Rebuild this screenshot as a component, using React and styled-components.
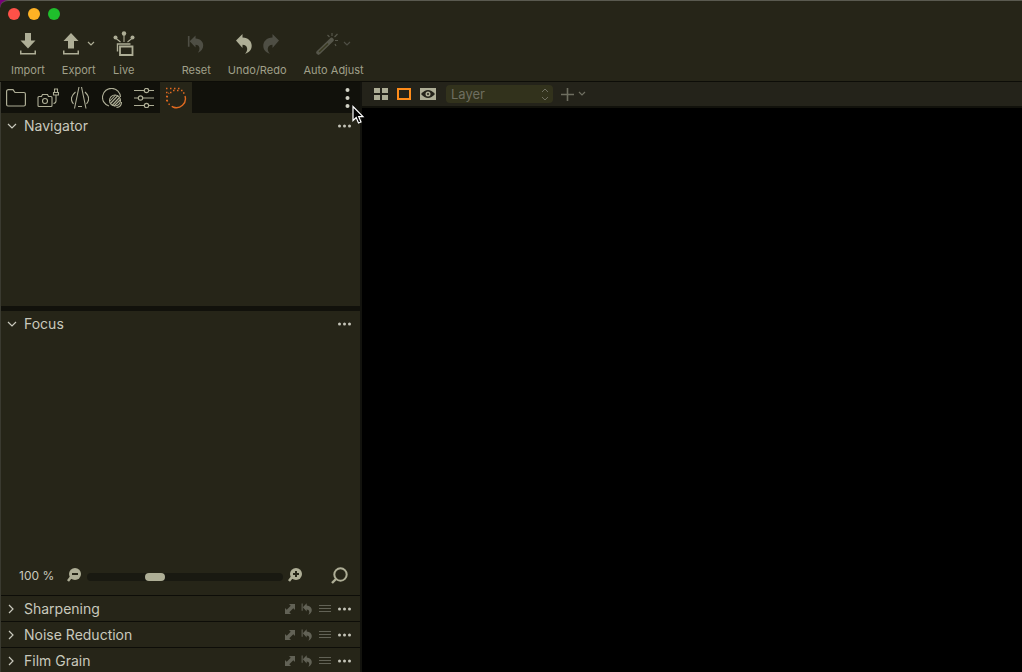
import React from 'react'
import styled, { createGlobalStyle } from 'styled-components'

const theme = {
  panel: '#262518',
  bar: '#11110b',
  line: '#0d0d08',
  edge: '#5a5a50',
  text: '#c9c9bd',
  label: '#a0a08a',
  icon: '#aeae96',
  dim: '#4e4e44',
  accent: '#ff8c1a',
}

const GlobalStyle = createGlobalStyle`
  * {
    box-sizing: border-box;
  }

  body {
    margin: 0;
    background: #7a007a;
    font-family: Inter, "Liberation Sans", sans-serif;
    overflow: hidden;
  }

  button, select {
    font-family: inherit;
    color: inherit;
    background: none;
    border: 0;
    padding: 0;
    margin: 0;
  }

  svg {
    display: block;
    flex: none;
  }
`

const Window = styled.div`
  position: relative;
  display: flex;
  flex-direction: column;
  height: 100vh;
  overflow: hidden;
  background: ${theme.panel};
  border-top: 1px solid ${theme.edge};
  border-radius: 8px 0 0 0;
  color: ${theme.text};
`

const TitleBar = styled.div`
  display: flex;
  gap: 8px;
  padding: 7px 8px 0;
`

const Light = styled.button`
  width: 12px;
  height: 12px;
  border-radius: 50%;
  background: ${(p) => p.$color};
`

const Toolbar = styled.header`
  display: flex;
  gap: 17px;
  height: 61px;
  padding: 11px 11px 0;
`

const Tool = styled.button`
  display: flex;
  flex-direction: column;
  align-items: center;
  margin-left: ${(p) => (p.$apart ? '30px' : '0')};
  color: ${theme.label};
  font-size: 11px;
  line-height: 14px;
  white-space: nowrap;
`

const ToolIcons = styled.span`
  display: flex;
  align-items: center;
  justify-content: center;
  gap: ${(p) => p.$gap || 8}px;
  height: 26px;
  margin-bottom: 6px;
  color: ${theme.icon};
`

const Main = styled.div`
  display: flex;
  flex: 1;
  min-height: 0;
  border-top: 1px solid ${theme.line};
`

const Sidebar = styled.aside`
  width: 362px;
  flex: none;
  border-left: 1px solid #3a3a30;
  border-right: 2px solid #13130e;
`

const Tabs = styled.nav`
  display: flex;
  align-items: stretch;
  height: 31px;
  background: ${theme.bar};
`

const Tab = styled.button`
  display: flex;
  align-items: center;
  justify-content: center;
  width: 32px;
  color: ${theme.icon};
  background: ${(p) => (p.$active ? theme.panel : 'none')};

  &:first-child {
    width: 31px;
    padding-right: 2px;
  }
`

const MoreTabs = styled.button`
  margin-left: auto;
  padding-right: 10px;
  color: #d2d2c6;
`

const Section = styled.section`
  border-bottom: ${(p) => (p.$thick ? 5 : 0)}px solid ${theme.bar};
`

const SectionHead = styled.div`
  display: flex;
  align-items: center;
  height: 26px;
  padding: 0 9px 0 6px;
  border-top: ${(p) => (p.$ruled ? 1 : 0)}px solid ${theme.line};
`

const SectionTitle = styled.button`
  display: flex;
  align-items: center;
  gap: 7px;
  margin-right: auto;
  font-size: 14px;
  line-height: 20px;
`

const SectionActions = styled.div`
  display: flex;
  align-items: center;
  gap: 6px;
  color: #626256;
`

const Preview = styled.div`
  height: ${(p) => p.$height}px;
`

const ZoomRow = styled.div`
  display: flex;
  align-items: center;
  height: 40px;
  padding: 0 12px 0 18px;
  color: ${theme.icon};
`

const ZoomValue = styled.output`
  width: 48px;
  font-size: 12px;
  color: ${theme.text};
  white-space: nowrap;
`

const ZoomSlider = styled.input`
  flex: 1;
  min-width: 0;
  height: 8px;
  margin: 4px 5px 0 6px;
  appearance: none;
  background: #191911;
  border-radius: 4px;

  &::-webkit-slider-thumb {
    appearance: none;
    width: 20px;
    height: 8px;
    border-radius: 4px;
    background: ${theme.icon};
  }
`

const FitButton = styled.button`
  margin-left: 29px;
`

const Viewer = styled.main`
  display: flex;
  flex-direction: column;
  flex: 1;
  min-width: 0;
`

const ViewerBar = styled.div`
  display: flex;
  align-items: center;
  height: 26px;
  padding-left: 12px;
  background: #24231a;
  border-bottom: 2px solid #11110b;
`

const ViewButton = styled.button`
  margin-right: 9px;
  color: ${(p) => (p.$active ? theme.accent : theme.icon)};
`

const LayerField = styled.label`
  display: flex;
  align-items: center;
  width: 107px;
  height: 18px;
  margin: 0 8px 0 1px;
  padding: 0 4px 0 5px;
  background: #32321c;
  border-radius: 4px;
  color: #6e6e60;

  select {
    flex: 1;
    appearance: none;
    font-size: 13px;
    line-height: 18px;
    outline: 0;
  }
`

const AddLayer = styled.button`
  display: flex;
  align-items: center;
  gap: 4px;
  color: #6e6e60;
`

const Canvas = styled.div`
  flex: 1;
  background: #000;
`

const Pointer = styled.svg`
  position: absolute;
  left: 352px;
  top: 104px;
`

const Chevron = ({ dir }) => (
  <svg width="10" height="10" viewBox="0 0 10 10" fill="none" stroke="currentColor" strokeWidth="1.2">
    <path d={dir === 'down' ? 'M1 3l4 4 4-4' : 'M2 1l4 4-4 4'} />
  </svg>
)

const SmallChevron = ({ color = 'currentColor' }) => (
  <svg width="8" height="6" viewBox="0 0 8 6" fill="none" stroke={color} strokeWidth="1.2">
    <path d="M1 1l3 3 3-3" />
  </svg>
)

const ImportIcon = () => (
  <svg width="16" height="22" viewBox="0 0 16 22" fill="currentColor">
    <path d="M5 0h6v7.500H15.500L8 15.500.5 7.500H5z" />
    <path d="M0 17.500h1.500v2.500h13v-2.500H16v4H0z" />
  </svg>
)

const ExportIcon = () => (
  <svg width="16" height="22" viewBox="0 0 16 22" fill="currentColor">
    <path d="M5 15.500h6V8h4.500L8 0 .5 8H5z" />
    <path d="M0 17.500h1.500v2.500h13v-2.500H16v4H0z" />
  </svg>
)

const LiveIcon = () => (
  <svg width="22" height="26" viewBox="0 0 22 26" fill="none" stroke="currentColor" strokeWidth="1.4">
    <path d="M11 3v8M2.500 7l5 4M19.500 7l-5 4" strokeWidth="1.1" />
    <g fill="currentColor" stroke="none">
      <circle cx="11" cy="2.500" r="2.200" />
      <circle cx="2.500" cy="6.500" r="2" />
      <circle cx="19.500" cy="6.500" r="2" />
    </g>
    <path d="M4.500 20.500v-7.500h13" />
    <path d="M7 15.500h12.500v8.500H7z" strokeWidth="1.8" />
  </svg>
)

const UndoArrow = ({ flip, color = 'currentColor' }) => (
  <svg width="16" height="20" viewBox="0 0 16 20" fill={color}>
    <path
      transform={flip ? 'translate(16 0) scale(-1 1)' : undefined}
      d="M0 6.500L6.500 0v3.500c6 .3 9.200 4 9.200 8.200 0 3.800-2.500 6.800-6.700 8 3.500-3 3-9-2.500-9V14z"
    />
  </svg>
)

const ResetArrow = ({ size = 18, color = 'currentColor' }) => (
  <svg width={size} height={size} viewBox="0 0 18 20" fill={color}>
    <path d="M0 1h1.800v12H0z" />
    <path d="M2 7l6.500-6.500V4c5.500.3 8.500 3.700 8.500 7.700 0 3.500-2 6.500-6 8 3-3.500 2.500-9-2.500-9V14z" />
  </svg>
)

const WandIcon = () => (
  <svg width="22" height="22" viewBox="0 0 22 22" fill="none" stroke="#56564a">
    <path d="M2.500 19.500L15.500 7" strokeWidth="4.5" strokeLinecap="round" />
    <path d="M3 19L12 10.500" stroke="#3a3a20" strokeWidth="1.5" />
    <path d="M16 0v3M21.500 1l-3 3M19 7.500h3M11.500 2l2 2M19 11l1 2" strokeWidth="1.2" />
  </svg>
)

const FolderIcon = () => (
  <svg width="20" height="18" viewBox="0 0 20 18" fill="none" stroke="currentColor" strokeWidth="1.2">
    <path d="M.6 15.500V2.500Q.6.6 2.500.6h4.500l2 2.900h9q1.400 0 1.400 1.500v10.500q0 1.500-1.500 1.500H2Q.6 17 .6 15.500z" />
  </svg>
)

const CaptureIcon = () => (
  <svg width="22" height="20" viewBox="0 0 22 20" fill="none" stroke="currentColor" strokeWidth="1.1">
    <path d="M1 9.500q0-1 1-1h2.500l1-2h5l1 2H14q1 0 1 1v8q0 1-1 1H2q-1 0-1-1z" />
    <circle cx="8" cy="13" r="2.500" />
    <path d="M17.500 1h3v3.500h-3zM16.500 4.500h5V7h-5zM19 7v6q0 2-2.500 2.500" />
  </svg>
)

const LensIcon = () => (
  <svg width="18" height="22" viewBox="0 0 18 22" fill="none" stroke="currentColor" strokeWidth="1.1">
    <path d="M8 0L3.500 21.500M10.500 0L15 21.500M7 19.500h4M4.500 5Q-2.500 11 2.500 17M14 5Q20.500 11 15.500 17" />
  </svg>
)

const ColorIcon = () => (
  <svg width="20" height="20" viewBox="0 0 20 20" fill="none" stroke="currentColor" strokeWidth="1.1">
    <path d="M7 18A9 9 0 1 1 18.500 9" />
    <circle cx="13" cy="12.500" r="5.500" />
    <path d="M8 13l5.500-6M8.500 15.500l7.500-8M10 17.500l7.500-8M12 18l6.500-6.500M19.500 14q0 5-5 5.500" />
  </svg>
)

const SlidersIcon = () => (
  <svg width="20" height="20" viewBox="0 0 20 20" fill="none" stroke="currentColor" strokeWidth="1.2">
    <path d="M0 2.500h10M15 2.500h5M0 10h4M9 10h11M0 17.500h10M15 17.500h5" />
    <circle cx="12.500" cy="2.500" r="2.200" />
    <circle cx="6.500" cy="10" r="2.200" />
    <circle cx="12.500" cy="17.500" r="2.200" />
  </svg>
)

const DetailIcon = () => (
  <svg width="22" height="22" viewBox="0 0 22 22" fill="none" stroke="#e06a20" strokeWidth="1.4">
    <path d="M20 9a9 9 0 0 1-12 11" />
    <path d="M8 20A9 9 0 0 1 4 6" strokeDasharray="1.5 2.5" />
    <path d="M1 1.500h1.500M5 1.500h1.500M9 1.500h1.500M13 1.500h1.500M1 5.500h1.500M5 5.500h1.500M1 9.500h1.500M1 13.500h1.500M8 3.500h1.500M12 3.500h1.500M16 3.500h1.500M18 6h1.500" />
  </svg>
)

const DotsIcon = () => (
  <svg width="14" height="4" viewBox="0 0 14 4" fill="#c4c4b8">
    <circle cx="2.500" cy="2" r="1.500" />
    <circle cx="7.500" cy="2" r="1.500" />
    <circle cx="12.500" cy="2" r="1.500" />
  </svg>
)

const MoreIcon = () => (
  <svg width="5" height="20" viewBox="0 0 5 20" fill="currentColor">
    <circle cx="2.500" cy="2" r="2" />
    <circle cx="2.500" cy="10" r="2" />
    <circle cx="2.500" cy="18" r="2" />
  </svg>
)

const ExpandIcon = () => (
  <svg width="10" height="10" viewBox="0 0 10 10" fill="currentColor">
    <path d="M4 0h6v6L8.300 4.300 4.300 8.300 6 10H0V4l1.700 1.700 4-4z" />
  </svg>
)

const PresetIcon = () => (
  <svg width="12" height="9" viewBox="0 0 12 9" stroke="currentColor">
    <path d="M0 1.500h12M0 4.500h12M0 7.500h12" />
  </svg>
)

const LoupeIcon = ({ sign }) => (
  <svg width="14" height="14" viewBox="0 0 14 14" fill="currentColor">
    <circle cx="8" cy="6" r="6" />
    <path d="M4 9L1 13" stroke="currentColor" strokeWidth="2.5" />
    <path d={sign === 'plus' ? 'M5 6h6M8 3v6' : 'M5 6h6'} stroke={theme.panel} strokeWidth="2" />
  </svg>
)

const FitIcon = () => (
  <svg width="17" height="17" viewBox="0 0 17 17" fill="none" stroke="currentColor">
    <circle cx="9.500" cy="7.500" r="6.200" strokeWidth="2" />
    <path d="M5 12l-4 4" strokeWidth="2.4" />
  </svg>
)

const tabs = [
  ['Library', FolderIcon],
  ['Capture', CaptureIcon],
  ['Lens', LensIcon],
  ['Color', ColorIcon],
  ['Exposure', SlidersIcon],
  ['Details', DetailIcon],
]

const collapsed = ['Sharpening', 'Noise Reduction', 'Film Grain']

function PanelHead({ title, open }) {
  return (
    <SectionHead $ruled={!open}>
      <SectionTitle aria-expanded={!!open}>
        <Chevron dir={open ? 'down' : 'right'} />
        {title}
      </SectionTitle>
      <SectionActions>
        {!open && (
          <>
            <button aria-label={`Copy ${title}`}><ExpandIcon /></button>
            <button aria-label={`Reset ${title}`}><ResetArrow size={12} /></button>
            <button aria-label={`${title} presets`}><PresetIcon /></button>
          </>
        )}
        <button aria-label={`${title} menu`}><DotsIcon /></button>
      </SectionActions>
    </SectionHead>
  )
}

export default function App() {
  return (
    <Window>
      <GlobalStyle />
      <TitleBar>
        <Light $color="#ff5148" aria-label="Close" />
        <Light $color="#ffb224" aria-label="Minimize" />
        <Light $color="#1fbe2c" aria-label="Zoom" />
      </TitleBar>
      <Toolbar>
        <Tool>
          <ToolIcons><ImportIcon /></ToolIcons>
          Import
        </Tool>
        <Tool>
          <ToolIcons><ExportIcon /><SmallChevron /></ToolIcons>
          Export
        </Tool>
        <Tool>
          <ToolIcons><LiveIcon /></ToolIcons>
          Live
        </Tool>
        <Tool $apart>
          <ToolIcons><ResetArrow color={theme.dim} /></ToolIcons>
          Reset
        </Tool>
        <Tool>
          <ToolIcons $gap={11}><UndoArrow /><UndoArrow flip color={theme.dim} /></ToolIcons>
          Undo/Redo
        </Tool>
        <Tool>
          <ToolIcons $gap={5}><WandIcon /><SmallChevron color={theme.dim} /></ToolIcons>
          Auto Adjust
        </Tool>
      </Toolbar>
      <Main>
        <Sidebar>
          <Tabs>
            {tabs.map(([name, TabIcon]) => (
              <Tab key={name} aria-label={name} $active={name === 'Details'}>
                <TabIcon />
              </Tab>
            ))}
            <MoreTabs aria-label="More"><MoreIcon /></MoreTabs>
          </Tabs>
          <Section $thick>
            <PanelHead title="Navigator" open />
            <Preview $height={167} />
          </Section>
          <Section>
            <PanelHead title="Focus" open />
            <Preview $height={218} />
            <ZoomRow>
              <ZoomValue>100 %</ZoomValue>
              <button aria-label="Zoom out"><LoupeIcon sign="minus" /></button>
              <ZoomSlider type="range" aria-label="Zoom level" defaultValue="33" />
              <button aria-label="Zoom in"><LoupeIcon sign="plus" /></button>
              <FitButton aria-label="Pick focus point"><FitIcon /></FitButton>
            </ZoomRow>
          </Section>
          {collapsed.map((title) => (
            <Section key={title}>
              <PanelHead title={title} />
            </Section>
          ))}
        </Sidebar>
        <Viewer>
          <ViewerBar>
            <ViewButton aria-label="Grid view">
              <svg width="14" height="12" viewBox="0 0 14 12" fill="currentColor">
                <path d="M0 0h6v5H0zM8 0h6v5H8zM0 7h6v5H0zM8 7h6v5H8z" />
              </svg>
            </ViewButton>
            <ViewButton $active aria-label="Single view">
              <svg width="14" height="12" viewBox="0 0 14 12" fill="none" stroke="currentColor" strokeWidth="2">
                <path d="M1 1h12v10H1z" />
              </svg>
            </ViewButton>
            <ViewButton aria-label="Proof view">
              <svg width="16" height="12" viewBox="0 0 16 12">
                <path d="M0 0h16v12H0z" fill="currentColor" />
                <path d="M1 6q7-8 14 0-7 8-14 0z" fill="#24231a" />
                <circle cx="8" cy="6" r="2.500" fill="currentColor" />
                <circle cx="8" cy="6" r="1" fill="#24231a" />
              </svg>
            </ViewButton>
            <LayerField>
              <select aria-label="Layer" defaultValue="Layer">
                <option>Layer</option>
              </select>
              <svg width="8" height="13" viewBox="0 0 8 13" fill="none" stroke="currentColor">
                <path d="M1 4l3-3 3 3M1 9l3 3 3-3" />
              </svg>
            </LayerField>
            <AddLayer aria-label="Add layer">
              <svg width="13" height="13" viewBox="0 0 13 13" stroke="currentColor" strokeWidth="1.6">
                <path d="M6.500 0v13M0 6.500h13" />
              </svg>
              <SmallChevron />
            </AddLayer>
          </ViewerBar>
          <Canvas />
        </Viewer>
      </Main>
      <Pointer width="13" height="20" viewBox="0 0 13 20" fill="#000" stroke="#fff" strokeWidth="1.2">
        <path d="M1 1.500v14l3.200-3 2.300 5.500 2.500-1-2.300-5.300H11z" />
      </Pointer>
    </Window>
  )
}
